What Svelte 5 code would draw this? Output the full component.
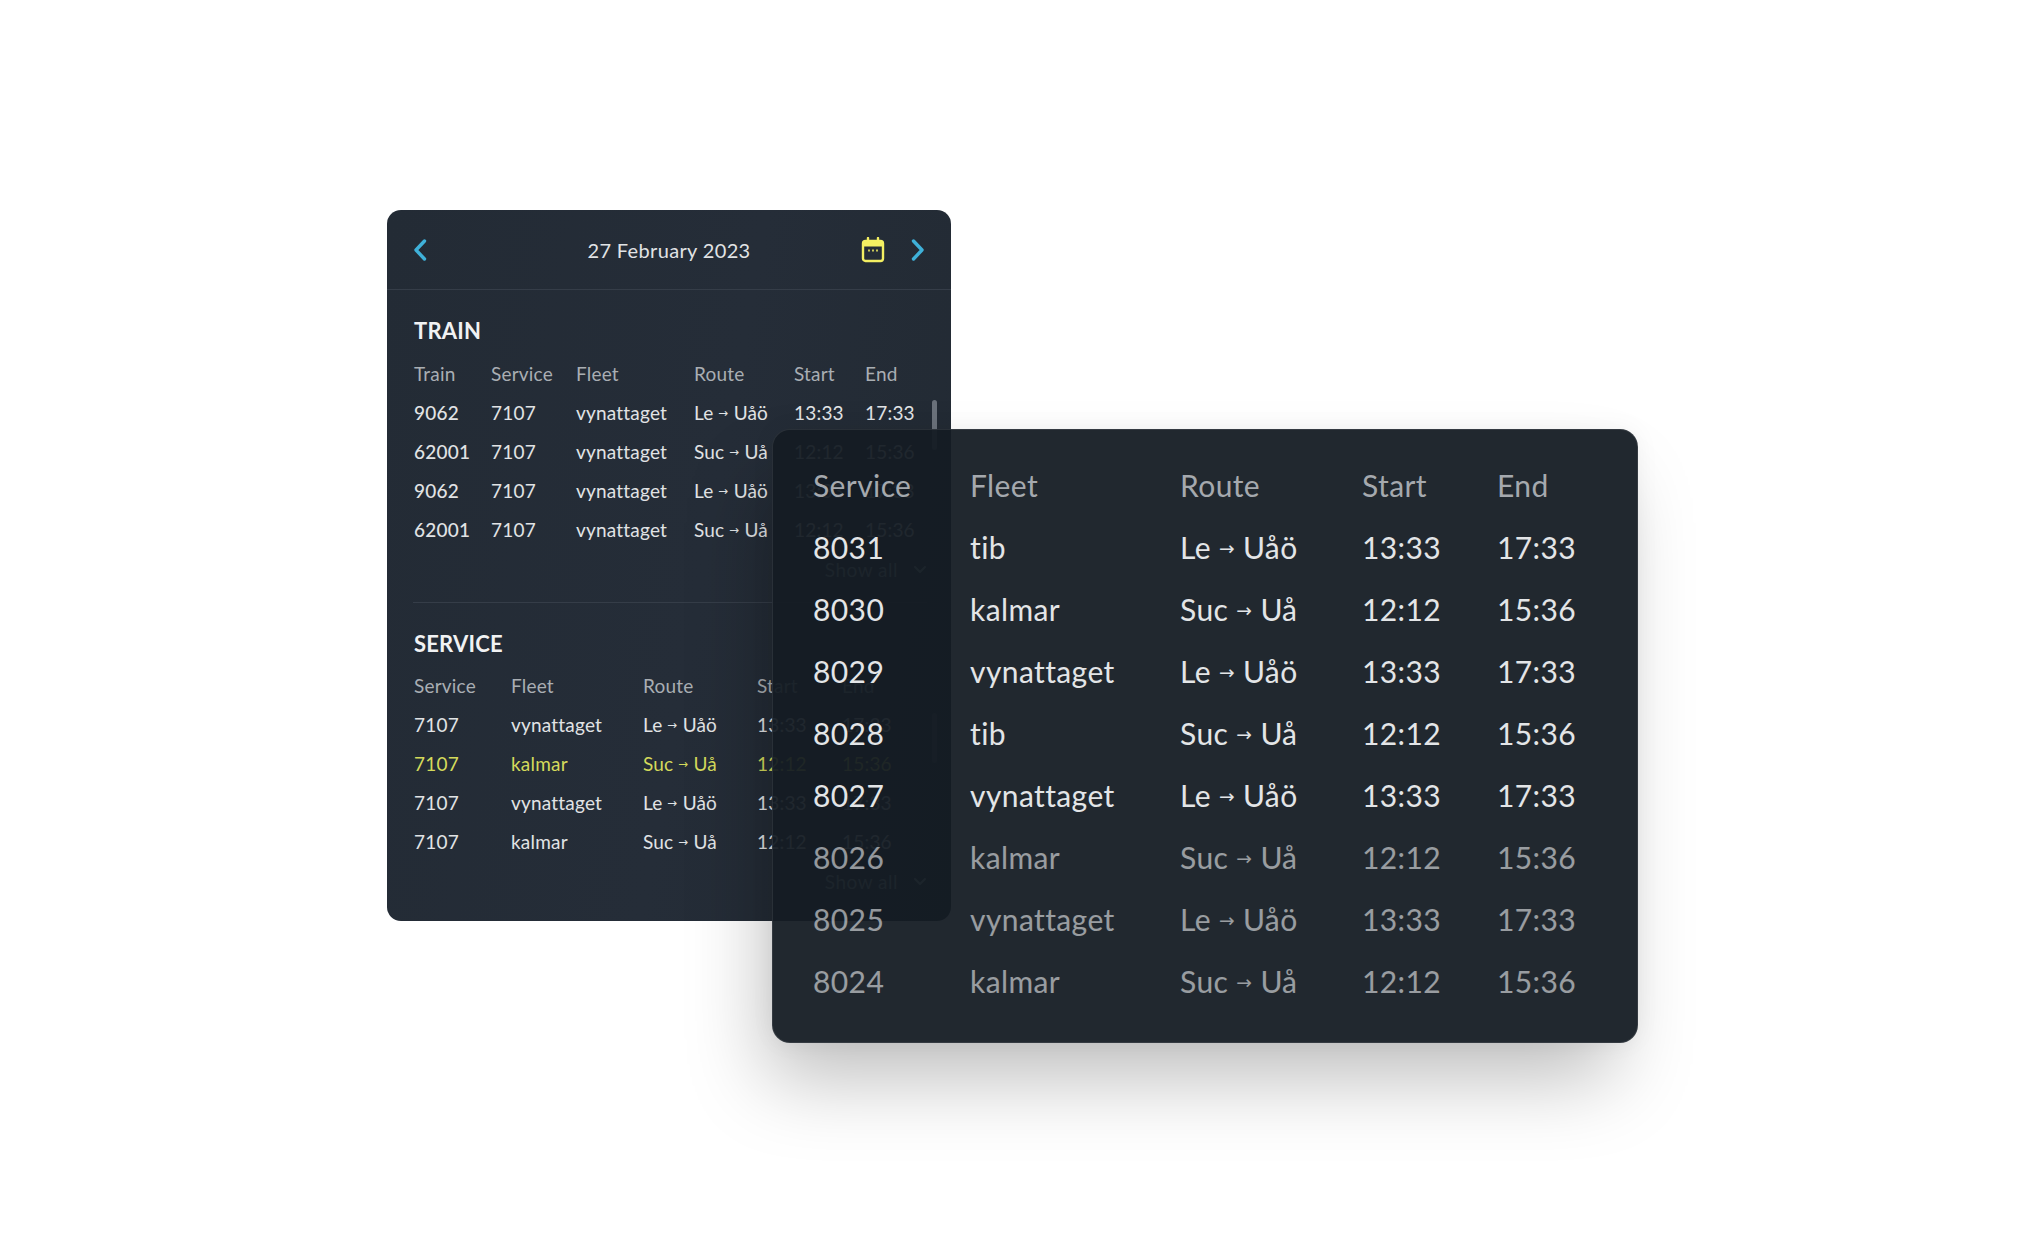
<script>
	const trainRows = [
		{ train: "9062", service: "7107", fleet: "vynattaget", from: "Le", to: "Uåö", start: "13:33", end: "17:33" },
		{ train: "62001", service: "7107", fleet: "vynattaget", from: "Suc", to: "Uå", start: "12:12", end: "15:36" },
		{ train: "9062", service: "7107", fleet: "vynattaget", from: "Le", to: "Uåö", start: "13:33", end: "17:33" },
		{ train: "62001", service: "7107", fleet: "vynattaget", from: "Suc", to: "Uå", start: "12:12", end: "15:36" },
	];

	const serviceRows = [
		{ service: "7107", fleet: "vynattaget", from: "Le", to: "Uåö", start: "13:33", end: "17:33" },
		{ service: "7107", fleet: "kalmar", from: "Suc", to: "Uå", start: "12:12", end: "15:36", active: true },
		{ service: "7107", fleet: "vynattaget", from: "Le", to: "Uåö", start: "13:33", end: "17:33" },
		{ service: "7107", fleet: "kalmar", from: "Suc", to: "Uå", start: "12:12", end: "15:36" },
	];

	const bigRows = [
		{ service: "8031", fleet: "tib", from: "Le", to: "Uåö", start: "13:33", end: "17:33" },
		{ service: "8030", fleet: "kalmar", from: "Suc", to: "Uå", start: "12:12", end: "15:36" },
		{ service: "8029", fleet: "vynattaget", from: "Le", to: "Uåö", start: "13:33", end: "17:33" },
		{ service: "8028", fleet: "tib", from: "Suc", to: "Uå", start: "12:12", end: "15:36" },
		{ service: "8027", fleet: "vynattaget", from: "Le", to: "Uåö", start: "13:33", end: "17:33" },
		{ service: "8026", fleet: "kalmar", from: "Suc", to: "Uå", start: "12:12", end: "15:36", dim: true },
		{ service: "8025", fleet: "vynattaget", from: "Le", to: "Uåö", start: "13:33", end: "17:33", dim: true },
		{ service: "8024", fleet: "kalmar", from: "Suc", to: "Uå", start: "12:12", end: "15:36", dim: true },
	];
</script>

{#snippet route(row)}
	<span>{row.from} <span class="arrow">→</span> {row.to}</span>
{/snippet}

{#snippet showAll()}
	<div class="show-all">
		<span>Show all</span>
		<svg width="14" height="9" viewBox="0 0 14 9" fill="none">
			<path d="M2 2l5 5 5-5" stroke="currentColor" stroke-width="2" stroke-linecap="round" stroke-linejoin="round" />
		</svg>
	</div>
{/snippet}

<div class="stage">
	<div class="board">
		<section class="panel">
			<header class="panel-head">
				<svg class="chevron" width="14" height="22" viewBox="0 0 14 22" fill="none">
					<path d="M11.5 2L3 11l8.5 9" stroke="currentColor" stroke-width="3.4" stroke-linecap="round" stroke-linejoin="round" />
				</svg>
				<div class="date">27 February 2023</div>
				<svg class="calendar" width="24" height="26" viewBox="0 0 24 26" fill="none">
					<rect x="2" y="4" width="20" height="20" rx="2.5" stroke="currentColor" stroke-width="2.4" />
					<path d="M2 5h20v4.5H2z" fill="currentColor" />
					<path d="M7 1v4M17 1v4" stroke="currentColor" stroke-width="2.4" stroke-linecap="round" />
					<path d="M7.2 13.5h1.6M11.2 13.5h1.6M15.2 13.5h1.6" stroke="currentColor" stroke-width="2.2" />
				</svg>
				<svg class="chevron next" width="14" height="22" viewBox="0 0 14 22" fill="none">
					<path d="M2.5 2L11 11l-8.5 9" stroke="currentColor" stroke-width="3.4" stroke-linecap="round" stroke-linejoin="round" />
				</svg>
			</header>

			<div class="block train">
				<h2>TRAIN</h2>
				<div class="grid-row head">
					<span>Train</span><span>Service</span><span>Fleet</span><span>Route</span><span>Start</span><span>End</span>
				</div>
				{#each trainRows as row}
					<div class="grid-row">
						<span class="strong">{row.train}</span><span>{row.service}</span><span>{row.fleet}</span>
						{@render route(row)}
						<span>{row.start}</span><span>{row.end}</span>
					</div>
				{/each}
				{@render showAll()}
				<div class="scrollbar"></div>
			</div>

			<div class="divider"></div>

			<div class="block service">
				<h2>SERVICE</h2>
				<div class="grid-row head">
					<span>Service</span><span>Fleet</span><span>Route</span><span>Start</span><span>End</span>
				</div>
				{#each serviceRows as row}
					<div class="grid-row" class:active={row.active}>
						<span>{row.service}</span><span>{row.fleet}</span>
						{@render route(row)}
						<span>{row.start}</span><span>{row.end}</span>
					</div>
				{/each}
				{@render showAll()}
				<div class="scrollbar low"></div>
			</div>
		</section>

		<section class="popup">
			<div class="big-row big-head">
				<span>Service</span><span>Fleet</span><span>Route</span><span>Start</span><span>End</span>
			</div>
			{#each bigRows as row}
				<div class="big-row" class:dim={row.dim}>
					<span>{row.service}</span><span>{row.fleet}</span>
					{@render route(row)}
					<span>{row.start}</span><span>{row.end}</span>
				</div>
			{/each}
		</section>
	</div>
</div>

<style>
	:global(body) {
		background: #fff;
	}

	.stage {
		height: 1254px;
		padding: 210px 0 0 387px;
		box-sizing: border-box;
		font-family: Lato, "Open Sans", sans-serif;
		overflow: hidden;
	}

	.board {
		position: relative;
		width: 564px;
	}

	.panel {
		width: 564px;
		height: 711px;
		box-sizing: border-box;
		border-radius: 14px;
		background: linear-gradient(100deg, #232b35 0%, #252d38 55%, #222a33 100%);
		color: #e1e3e5;
		font-size: 19px;
		letter-spacing: 0.2px;
	}

	.panel-head {
		height: 80px;
		box-sizing: border-box;
		display: flex;
		align-items: center;
		padding: 0 26px;
		border-bottom: 1px solid #353d48;
	}

	.chevron {
		color: #3fb1d9;
		flex: none;
	}

	.chevron.next {
		margin-left: 26px;
	}

	.date {
		flex: 1;
		text-align: center;
		font-size: 20px;
		letter-spacing: 0.35px;
		padding-left: 50px;
	}

	.calendar {
		color: #f3ef62;
		flex: none;
	}

	.block {
		position: relative;
		padding: 0 0 0 27px;
	}

	h2 {
		margin: 0;
		font-size: 22px;
		font-weight: 700;
		line-height: 28px;
		color: #f1f2f3;
	}

	.train {
		padding-top: 27px;
		height: 312px;
		box-sizing: border-box;
	}

	.service {
		padding-top: 27px;
	}

	.grid-row {
		display: grid;
		height: 39px;
		align-items: center;
		white-space: nowrap;
	}

	.train .grid-row {
		grid-template-columns: 77px 85px 118px 100px 71px 80px;
	}

	.service .grid-row {
		grid-template-columns: 97px 132px 114px 85px 80px;
	}

	.head {
		color: #a9aeb3;
	}

	.train h2 + .head {
		margin-top: 9px;
	}

	.service h2 + .head {
		margin-top: 8px;
	}

	.strong {
		font-weight: 500;
	}

	.active {
		color: #d4da5b;
	}

	.arrow {
		font-family: "DejaVu Sans", sans-serif;
		font-size: 0.62em;
		vertical-align: 0.22em;
	}

	.show-all {
		position: absolute;
		right: 24px;
		top: 268px;
		display: flex;
		align-items: center;
		gap: 15px;
		color: #aab0b6;
		letter-spacing: 0.5px;
	}

	.service .show-all {
		top: 267px;
	}

	.scrollbar {
		position: absolute;
		right: 14px;
		top: 110px;
		width: 5px;
		height: 50px;
		border-radius: 3px;
		background: #6b727b;
	}

	.scrollbar.low {
		top: 110px;
		background: #4a515b;
	}

	.divider {
		height: 1px;
		margin: 0 24px 0 26px;
		background: #353d48;
	}

	/* floats over the panel, slightly see-through */
	.popup {
		position: absolute;
		left: 385px;
		top: 219px;
		width: 866px;
		height: 614px;
		box-sizing: border-box;
		padding: 24px 0 0 40px;
		border: 1px solid rgba(255, 255, 255, 0.09);
		border-radius: 18px;
		background: rgba(20, 27, 35, 0.945);
		box-shadow:
			-15px 45px 80px -10px rgba(0, 0, 0, 0.26),
			0 0 24px rgba(0, 0, 0, 0.05);
		color: #e3e5e7;
		font-size: 30px;
		letter-spacing: 0.4px;
	}

	.big-row {
		display: grid;
		grid-template-columns: 157px 210px 182px 135px 140px;
		height: 62px;
		align-items: center;
		white-space: nowrap;
	}

	.big-head {
		color: #a5a9ae;
	}

	.dim {
		opacity: 0.62;
	}
</style>
